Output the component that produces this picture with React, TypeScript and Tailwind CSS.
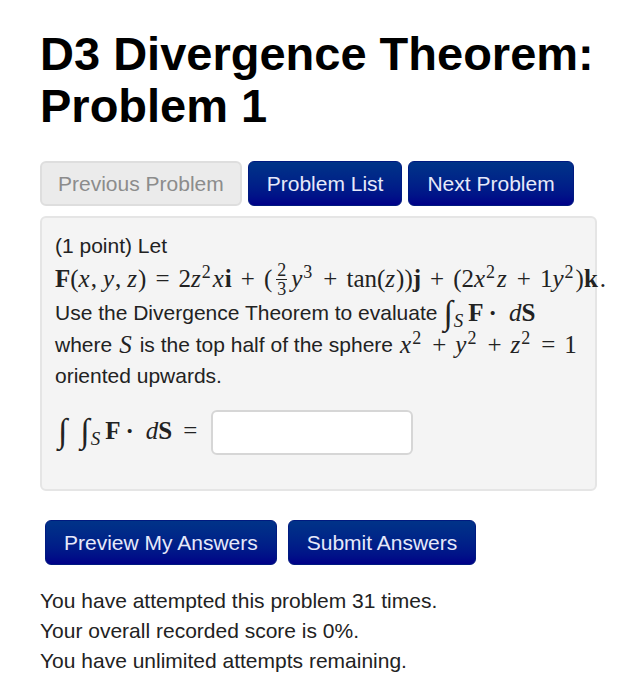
import { ReactNode } from 'react';
import { clsx } from 'clsx';

interface ChildrenProps {
  children: ReactNode;
}

interface ButtonProps {
  label: string;
  disabled?: boolean;
}

const Button = ({ label, disabled = false }: ButtonProps) => (
  <button
    type="button"
    disabled={disabled}
    className={clsx(
      'h-[45px] rounded-md text-[21px] leading-[30px] whitespace-nowrap',
      disabled
        ? 'border-2 border-[#dedede] bg-[#ebebeb] px-4 text-[#8c8c8c]'
        : 'border border-[#001a80] bg-linear-to-b from-[#003388] to-[#000088] px-[18px] text-[#e6e9fa]'
    )}
  >
    {label}
  </button>
);

const Formula = ({ children }: ChildrenProps) => (
  <span className="inline-flex items-center font-['Liberation_Serif',serif] text-[25px] leading-[30px] whitespace-nowrap">
    {children}
  </span>
);

// Italic variable
const Var = ({ children }: ChildrenProps) => <i className="mr-px">{children}</i>;

// Binary operator or relation
const Op = ({ children }: ChildrenProps) => <span className="mx-[9px]">{children}</span>;

const Sup = ({ children }: ChildrenProps) => (
  <span className="mr-[2px] pb-[14px] text-[18px] leading-[16px]">{children}</span>
);

const Fraction = ({ top, bottom }: { top: string; bottom: string }) => (
  <span className="mx-[4px] inline-flex flex-col items-center text-[18px] leading-[18px]">
    <span className="border-b border-[#222] px-px">{top}</span>
    <span>{bottom}</span>
  </span>
);

const Integral = ({ sub }: { sub?: string }) => (
  <>
    <i className="mr-px ml-[3px] text-[34px] leading-[30px]">∫</i>
    {sub && <i className="pt-[16px] text-[19px] leading-[16px]">{sub}</i>}
  </>
);

const Flux = () => (
  <>
    <b className="ml-[5px]">F</b>
    <b className="mr-[12px] ml-[5px]">·</b>
    <i>d</i>
    <b>S</b>
  </>
);

const attempts = [
  'You have attempted this problem 31 times.',
  'Your overall recorded score is 0%.',
  'You have unlimited attempts remaining.'
];

export default function App() {
  return (
    <main className="bg-white px-10 pt-[28px] pb-6 font-['Liberation_Sans',Arial,sans-serif] text-[21px] leading-[30px] text-[#222]">
      <h1 className="-mr-4 text-[47px] leading-[52px] font-bold text-black">
        D3 Divergence Theorem: Problem 1
      </h1>

      <nav className="mt-[29px] flex gap-[6px]">
        <Button label="Previous Problem" disabled />
        <Button label="Problem List" />
        <Button label="Next Problem" />
      </nav>

      <form>
        <section className="mt-[10px] rounded-md border-2 border-[#e5e5e5] bg-[#f4f4f4] px-[13px] pt-[13px] pb-[34px]">
          <div className="whitespace-nowrap">
            <p>(1 point) Let</p>
            <p className="flex h-[36px] items-center">
              <Formula>
                <b>F</b>
                <span>(</span>
                <Var>x</Var>
                <span className="mr-[6px]">,</span>
                <Var>y</Var>
                <span className="mr-[6px]">,</span>
                <Var>z</Var>
                <span>)</span>
                <Op>=</Op>
                <span>2</span>
                <Var>z</Var>
                <Sup>2</Sup>
                <Var>x</Var>
                <b>i</b>
                <Op>+</Op>
                <span>(</span>
                <Fraction top="2" bottom="3" />
                <Var>y</Var>
                <Sup>3</Sup>
                <Op>+</Op>
                <span>tan(</span>
                <Var>z</Var>
                <span>))</span>
                <b>j</b>
                <Op>+</Op>
                <span>(2</span>
                <Var>x</Var>
                <Sup>2</Sup>
                <Var>z</Var>
                <Op>+</Op>
                <span>1</span>
                <Var>y</Var>
                <Sup>2</Sup>
                <span>)</span>
                <b>k</b>
                <span className="ml-[2px]">.</span>
              </Formula>
            </p>
            <p className="flex h-[32px] items-center gap-[3px]">
              Use the Divergence Theorem to evaluate
              <Formula>
                <Integral sub="S" />
                <Flux />
              </Formula>
            </p>
            <p className="flex h-[32px] items-center gap-[7px]">
              where
              <Formula>
                <Var>S</Var>
              </Formula>
              is the top half of the sphere
              <Formula>
                <Var>x</Var>
                <Sup>2</Sup>
                <Op>+</Op>
                <Var>y</Var>
                <Sup>2</Sup>
                <Op>+</Op>
                <Var>z</Var>
                <Sup>2</Sup>
                <Op>=</Op>
                <span>1</span>
              </Formula>
            </p>
            <p>oriented upwards.</p>
          </div>

          <div className="mt-[19px] flex items-center">
            <label htmlFor="answer" className="mr-[14px]">
              <Formula>
                <Integral />
                <span className="w-[9px]" />
                <Integral sub="S" />
                <Flux />
                <span className="ml-[11px]">=</span>
              </Formula>
            </label>
            <input
              id="answer"
              type="text"
              className="h-[45px] w-[202px] rounded-md border-2 border-[#d6d6d6] bg-white px-2"
            />
          </div>
        </section>

        <div className="mt-[29px] ml-[5px] flex gap-[11px]">
          <Button label="Preview My Answers" />
          <Button label="Submit Answers" />
        </div>
      </form>

      <div className="mt-[21px]">
        {attempts.map((line) => (
          <p key={line}>{line}</p>
        ))}
      </div>
    </main>
  );
}
